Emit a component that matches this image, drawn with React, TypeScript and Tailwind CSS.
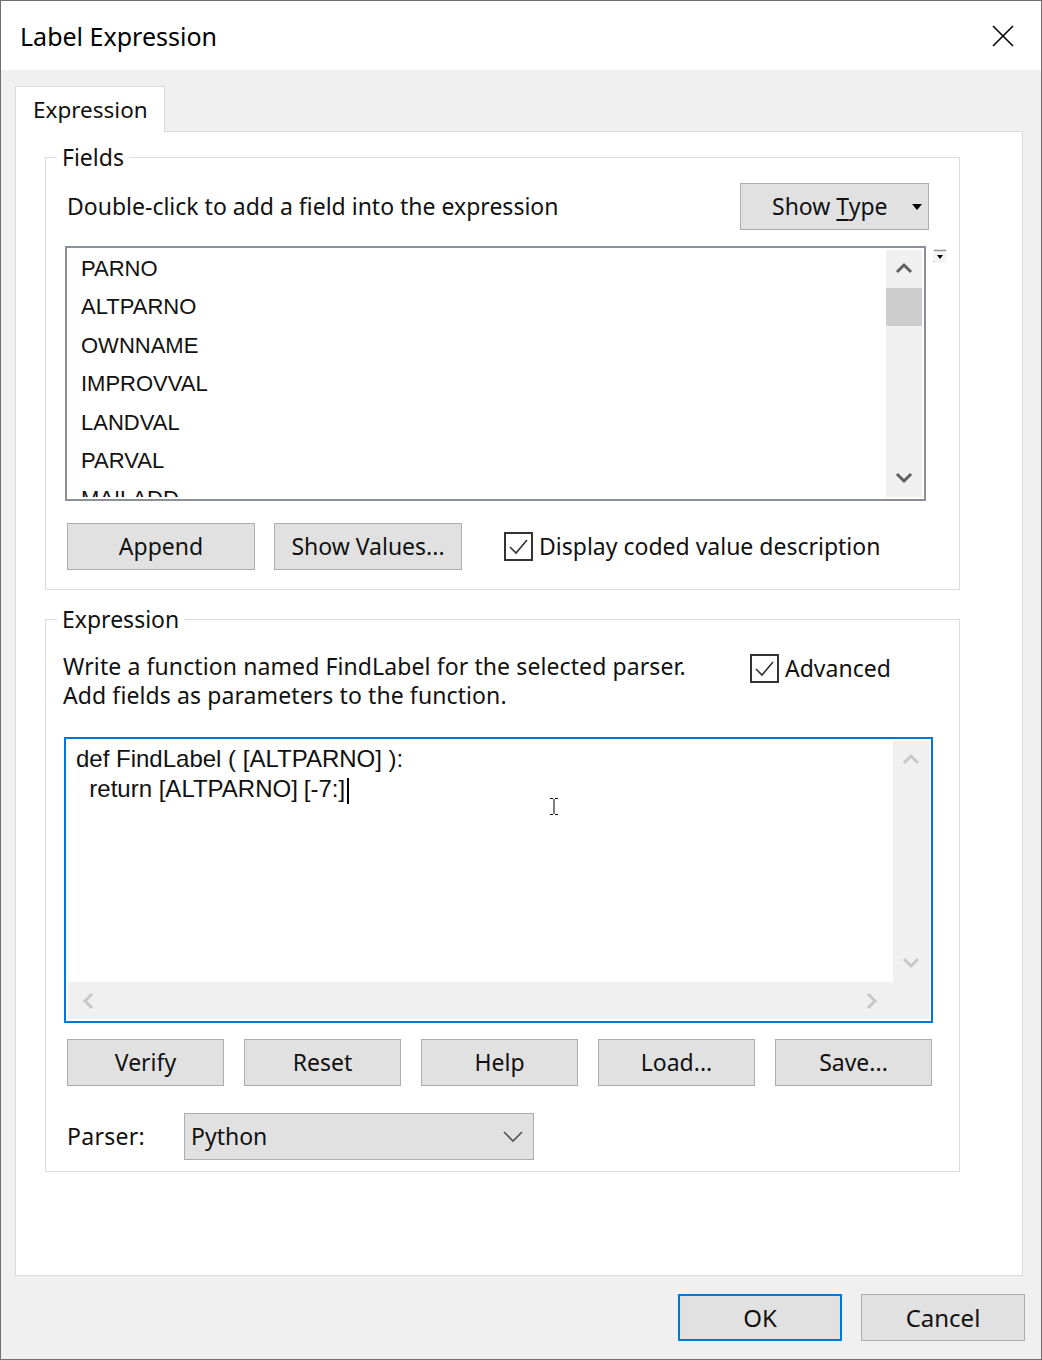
import React from "react";

const ui = "font-['Noto_Sans',sans-serif]";
const tahoma = "font-['Liberation_Sans',Arial,sans-serif]";

const fields = ["PARNO", "ALTPARNO", "OWNNAME", "IMPROVVAL", "LANDVAL", "PARVAL", "MAILADD"];

function Chevron({ dir, color, className }: { dir: "up" | "down" | "left" | "right"; color: string; className?: string }) {
  const paths: Record<string, string> = {
    up: "M3 11 L9 5 L15 11",
    down: "M3 6 L9 12 L15 6",
    left: "M11 3 L5 9 L11 15",
    right: "M6 3 L12 9 L6 15",
  };
  return (
    <svg width="18" height="18" viewBox="0 0 18 18" className={className}>
      <path d={paths[dir]} fill="none" stroke={color} strokeWidth="3" strokeLinecap="square" />
    </svg>
  );
}

function CheckBox() {
  return (
    <div className="w-[29px] h-[29px] border-2 border-[#333333] bg-white flex items-center justify-center shrink-0">
      <svg width="23" height="23" viewBox="0 0 23 23">
        <path d="M3 12 L9 18 L20 5" fill="none" stroke="#333333" strokeWidth="1.6" />
      </svg>
    </div>
  );
}

function Btn({ children, className = "" }: { children: React.ReactNode; className?: string }) {
  return (
    <div className={`h-[47px] bg-[#e1e1e1] border border-[#adadad] flex items-center justify-center text-[23px] text-[#111] ${className}`}>
      {children}
    </div>
  );
}

export default function App() {
  return (
    <div className={`w-[1042px] h-[1360px] border border-[#6f6f6f] flex flex-col bg-[#f0f0f0] ${ui}`}>
      {/* title bar */}
      <div className="h-[69px] bg-white flex items-center justify-between pl-[19px] pr-[27px] shrink-0">
        <span className="text-[25px] text-black leading-none mt-[1px]">Label Expression</span>
        <svg width="22" height="22" viewBox="0 0 22 22">
          <path d="M1 1 L21 21 M21 1 L1 21" stroke="#000" strokeWidth="1.6" />
        </svg>
      </div>

      {/* body */}
      <div className="flex-1 flex flex-col pl-[14px] pt-[16px]">
        <div className="w-[150px] h-[46px] bg-white border border-b-0 border-[#d9d9d9] relative z-10 flex items-center pl-[17px] text-[22.5px] text-[#111]">
          Expression
        </div>
        <div className="w-[1008px] h-[1145px] -mt-[1px] bg-white border border-[#d9d9d9] pl-[29px]">
          {/* Fields group */}
          <fieldset className="mt-[10px] w-[915px] border border-[#dcdcdc] pb-[19px]">
            <legend className="ml-[11px] px-[5px] text-[23px] leading-[30px] text-[#111]">Fields</legend>
            <div className="mt-[11px] flex items-center justify-between pl-[21px] pr-[30px]">
              <span className="text-[23px] text-[#111]">Double-click to add a field into the expression</span>
              <div className="w-[189px] h-[47px] bg-[#e1e1e1] border border-[#adadad] flex items-center pl-[31px] text-[23px] text-[#111]">
                <span>
                  Show <span className="underline underline-offset-4">T</span>ype
                </span>
                <svg width="10" height="6" viewBox="0 0 10 6" className="ml-[24px]">
                  <path d="M0 0 L10 0 L5 6 Z" fill="#000" />
                </svg>
              </div>
            </div>
            <div className="mt-[16px] ml-[19px] flex items-start">
              <div className="w-[861px] h-[255px] border-2 border-[#8b9097] p-[2px] flex">
                <div className={`flex-1 overflow-hidden pl-[12px] text-[22px] leading-[38.4px] text-[#111] ${tahoma}`}>
                  {fields.map((f) => (
                    <div key={f}>{f}</div>
                  ))}
                </div>
                <div className="w-[36px] bg-[#f0f0f0] flex flex-col items-center">
                  <div className="h-[38px] flex items-center justify-center">
                    <Chevron dir="up" color="#606060" />
                  </div>
                  <div className="w-full h-[38px] bg-[#cdcdcd]" />
                  <div className="flex-1" />
                  <div className="h-[38px] flex items-center justify-center">
                    <Chevron dir="down" color="#606060" />
                  </div>
                </div>
              </div>
              <svg width="14" height="14" viewBox="0 0 14 14" className="ml-[7px] mt-[3px]">
                <rect x="0" y="0" width="14" height="14" fill="#f4f4f4" />
                <path d="M1 1.5 L13 1.5" stroke="#9a9a9a" strokeWidth="1.5" />
                <path d="M4 6 L10 6 L7 10 Z" fill="#000" />
                <path d="M1 12 L1 13" stroke="#b0b0b0" />
              </svg>
            </div>
            <div className="mt-[22px] flex items-center pl-[21px]">
              <Btn className="w-[188px] h-[46px]">Append</Btn>
              <Btn className="w-[188px] h-[46px] ml-[19px]">Show Values...</Btn>
              <div className="ml-[42px] flex items-center gap-[6px]">
                <CheckBox />
                <span className="text-[23px] text-[#111]">Display coded value description</span>
              </div>
            </div>
          </fieldset>

          {/* Expression group */}
          <fieldset className="mt-[14px] w-[915px] border border-[#dcdcdc] pb-[11px]">
            <legend className="ml-[11px] px-[5px] text-[23px] leading-[30px] text-[#111]">Expression</legend>
            <div className="mt-[18px] flex items-start pl-[17px]">
              <div className="w-[687px] text-[23px] leading-[29px] tracking-[0.1px] text-[#111]">
                <div>Write a function named FindLabel for the selected parser.</div>
                <div>Add fields as parameters to the function.</div>
              </div>
              <div className="flex items-center gap-[6px] -mt-[1px]">
                <CheckBox />
                <span className="text-[23px] text-[#111]">Advanced</span>
              </div>
            </div>
            <div className="mt-[27px] ml-[18px] w-[869px] h-[286px] border-2 border-[#0078d7] p-[2px] flex flex-col">
              <div className="flex-1 flex">
                <div className={`flex-1 relative pl-[8px] pt-[3px] text-[24px] leading-[30px] text-[#111] ${tahoma}`}>
                  <div>def FindLabel ( [ALTPARNO] ):</div>
                  <div className="whitespace-pre">
                    {"  return [ALTPARNO]"}
                    <span className="ml-[6px]">[-7:]</span>
                    <span className="inline-block w-[2px] h-[26px] bg-black align-middle ml-[2px]" />
                  </div>
                  <svg width="8" height="17" viewBox="0 0 8 17" className="absolute left-[482px] top-[57px]">
                    <path d="M0 0.5 L3 0.5 M5 0.5 L8 0.5 M4 1 L4 16 M0 16.5 L3 16.5 M5 16.5 L8 16.5" stroke="#000" strokeWidth="1" />
                  </svg>
                </div>
                <div className="w-[36px] bg-[#f0f0f0] flex flex-col items-center justify-between py-[10px]">
                  <Chevron dir="up" color="#c8c8c8" />
                  <Chevron dir="down" color="#c8c8c8" />
                </div>
              </div>
              <div className="h-[37px] bg-[#f0f0f0] flex items-center justify-between pl-[12px] pr-[48px]">
                <Chevron dir="left" color="#c8c8c8" />
                <Chevron dir="right" color="#c8c8c8" />
              </div>
            </div>
            <div className="mt-[16px] ml-[21px] flex gap-[20px]">
              <Btn className="w-[157px]">Verify</Btn>
              <Btn className="w-[157px]">Reset</Btn>
              <Btn className="w-[157px]">Help</Btn>
              <Btn className="w-[157px]">Load...</Btn>
              <Btn className="w-[157px]">Save...</Btn>
            </div>
            <div className="mt-[27px] ml-[21px] flex items-center">
              <span className="w-[117px] text-[23px] tracking-[0.3px] text-[#111]">Parser:</span>
              <div className="w-[350px] h-[47px] bg-[#e1e1e1] border border-[#adadad] flex items-center justify-between pl-[6px] pr-[10px] text-[23px] text-[#111]">
                <span>Python</span>
                <svg width="20" height="12" viewBox="0 0 20 12">
                  <path d="M1 1 L10 10 L19 1" fill="none" stroke="#555" strokeWidth="1.6" />
                </svg>
              </div>
            </div>
          </fieldset>
        </div>

        <div className="mt-[18px] flex justify-end gap-[19px] pr-[16px]">
          <div className="w-[164px] h-[47px] bg-[#e1e1e1] border-2 border-[#0078d7] flex items-center justify-center text-[24px] text-[#111]">
            OK
          </div>
          <Btn className="w-[164px] text-[24px]">Cancel</Btn>
        </div>
      </div>
    </div>
  );
}
